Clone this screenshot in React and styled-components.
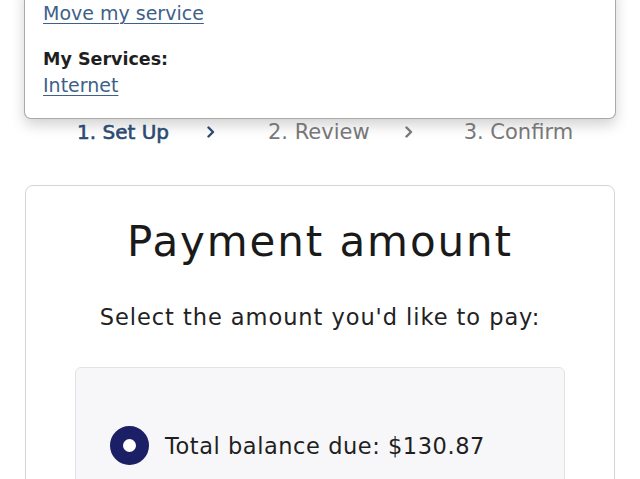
import React from "react";
import styled, { createGlobalStyle } from "styled-components";

const Global = createGlobalStyle`
  html, body { margin: 0; padding: 0; background: #ffffff; }
  body { font-family: "DejaVu Sans", "Noto Sans", sans-serif; overflow: hidden; }
`;

const Page = styled.div`
  width: 640px;
  height: 479px;
  overflow: hidden;
  display: flex;
  flex-direction: column;
`;

const AccountCard = styled.div`
  margin: -12px 24px 0 24px;
  padding: 12px 18px 20px 18px;
  background: #fff;
  border: 1.5px solid #a9a9a9;
  border-top: none;
  border-radius: 0 0 7px 7px;
  box-shadow: 0 6px 14px rgba(0, 0, 0, 0.18);
  display: flex;
  flex-direction: column;
  align-items: flex-start;
`;

const Link = styled.a`
  color: #3e6188;
  font-size: 19px;
  line-height: 26px;
  text-decoration: underline;
  text-underline-offset: 3px;
  text-decoration-thickness: 1px;
`;

const Label = styled.div`
  color: #1f1f1f;
  font-size: 17.5px;
  font-weight: 700;
  line-height: 26px;
  margin-top: ${(p) => p.$mt || 0}px;
`;

const Steps = styled.div`
  display: flex;
  align-items: center;
  padding: 1px 0 0 77px;
  height: 30px;
`;

const Step = styled.span`
  font-size: ${(p) => (p.$active ? 20 : 21)}px;
  font-weight: 400;
  -webkit-text-stroke: ${(p) => (p.$active ? "0.6px currentColor" : "0")};
  color: ${(p) => (p.$active ? "#2b4a72" : "#777777")};
  margin-right: ${(p) => p.$gap}px;
`;

const Chevron = styled.span`
  display: inline-flex;
  margin-right: ${(p) => p.$gap}px;
  color: ${(p) => (p.$active ? "#2b4a72" : "#777777")};
`;

const PaymentCard = styled.div`
  margin: 41px 25px 0 25px;
  border: 1.5px solid #d4d4d4;
  border-radius: 8px;
  display: flex;
  flex-direction: column;
  align-items: center;
  padding: 30px 49px 0 49px;
  flex: 1;
`;

const Title = styled.h1`
  margin: 0;
  font-size: 42px;
  font-weight: 400;
  color: #1a1a1a;
  line-height: 52px;
  letter-spacing: 1.9px;
`;

const Subtitle = styled.p`
  margin: 34px 0 0 0;
  font-size: 22.5px;
  font-weight: 400;
  color: #222;
  line-height: 30px;
  letter-spacing: 0.95px;
`;

const OptionBox = styled.div`
  align-self: stretch;
  margin-top: 35px;
  background: #f7f7f9;
  border: 1.5px solid #e3e3e6;
  border-radius: 6px;
  padding: 58px 30px 40px 34px;
  display: flex;
  align-items: center;
  gap: 16px;
`;

const Radio = styled.span`
  width: 39px;
  height: 39px;
  box-sizing: border-box;
  border-radius: 50%;
  border: 13px solid #1b1f66;
  background: #fff;
  flex-shrink: 0;
`;

const OptionText = styled.span`
  font-size: 22.5px;
  font-weight: 400;
  color: #1f1f1f;
  letter-spacing: 0.55px;
`;

const ChevronIcon = () => (
  <svg width="8" height="12" viewBox="0 0 8 12">
    <path d="M1.5 1.5 L6 6 L1.5 10.5" fill="none" stroke="currentColor" strokeWidth="2.4" strokeLinecap="round" strokeLinejoin="round" />
  </svg>
);

export default function App() {
  return (
    <Page>
      <Global />
      <AccountCard>
        <Link href="#">Move my service</Link>
        <Label $mt={20}>My Services:</Label>
        <Link href="#">Internet</Link>
      </AccountCard>
      <Steps>
        <Step $active $gap={38}>1. Set Up</Step>
        <Chevron $active $gap={53}><ChevronIcon /></Chevron>
        <Step $gap={35}>2. Review</Step>
        <Chevron $gap={51}><ChevronIcon /></Chevron>
        <Step $gap={0}>3. Confirm</Step>
      </Steps>
      <PaymentCard>
        <Title>Payment amount</Title>
        <Subtitle>Select the amount you'd like to pay:</Subtitle>
        <OptionBox>
          <Radio />
          <OptionText>Total balance due: $130.87</OptionText>
        </OptionBox>
      </PaymentCard>
    </Page>
  );
}
